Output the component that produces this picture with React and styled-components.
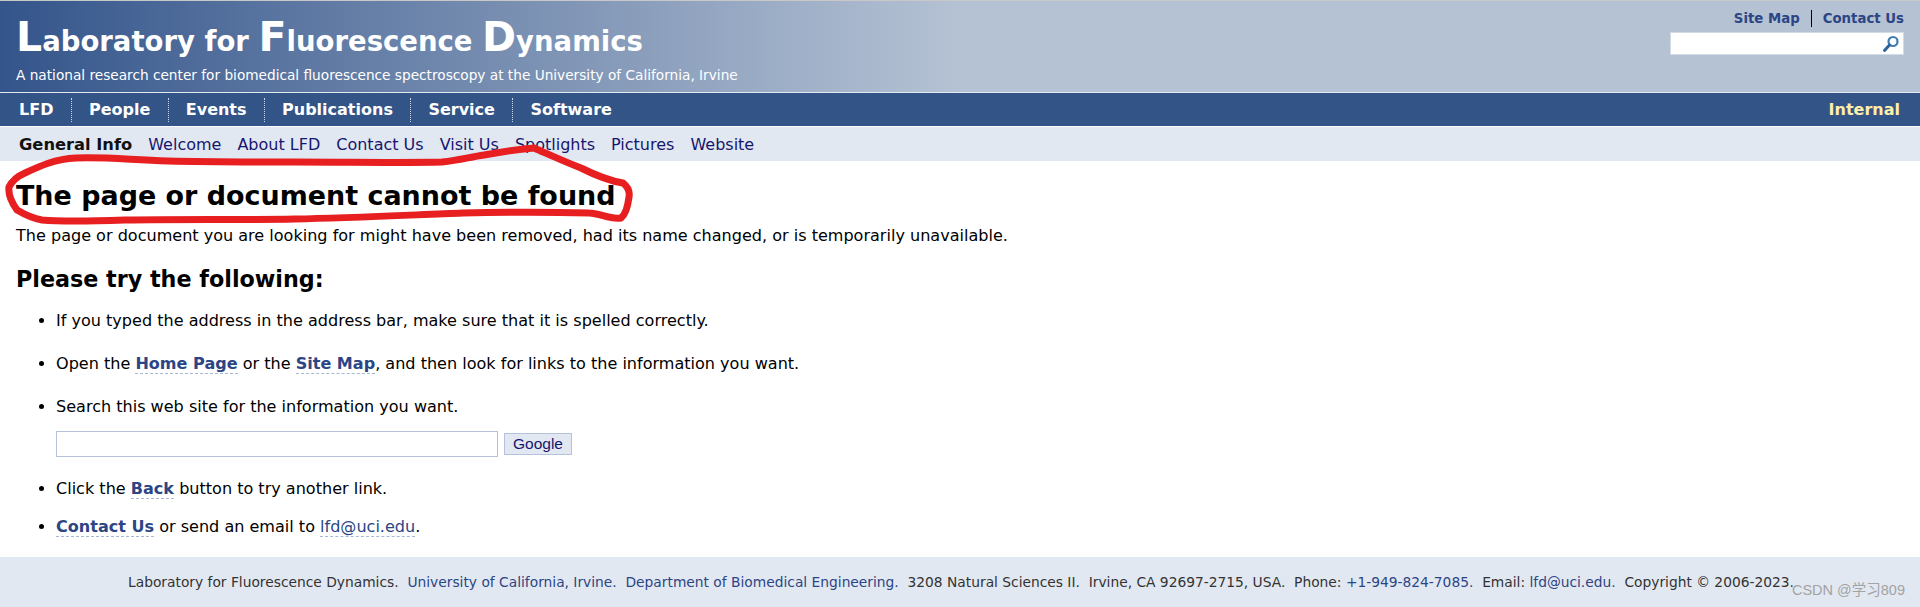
import React from "react";
import styled, { createGlobalStyle } from "styled-components";

const Global = createGlobalStyle`
  html, body { margin: 0; padding: 0; background: #fff; }
  body { font-family: "DejaVu Sans", Verdana, sans-serif; color: #000; }
`;
const Page = styled.div`position: relative; width: 1920px; height: 607px; overflow: hidden; display: flex; flex-direction: column;`;
const Header = styled.header`
  height: 91px; flex: none; display: flex; justify-content: space-between;
  border-top: 1px solid #c8c8c8; border-bottom: 1px solid #e4e9f1;
  background: linear-gradient(90deg, #34558b 0, #b5c2d4 960px, #b5c2d4 100%);
`;
const Brand = styled.div`padding: 0 0 0 16px; color: #fff;`;
const Title = styled.h1`margin: 14px 0 0; height: 44px; font-size: 27.5px; line-height: 44px; font-weight: 700; white-space: nowrap;`;
const Cap = styled.span`font-size: 41px;`;
const Tagline = styled.div`margin-top: 8px; font-size: 13.68px; line-height: 16px; white-space: nowrap;`;
const Tools = styled.div`display: flex; flex-direction: column; align-items: flex-end; padding: 9px 16px 0 0;`;
const ToolLinks = styled.div`display: flex; align-items: center; font-size: 13.3px; font-weight: 700; color: #2c4585; line-height: 17px;`;
const ToolLink = styled.span`padding: 0 ${(p) => (p.$last ? 0 : "11px")} 0 ${(p) => (p.$last ? "11px" : 0)}; border-left: ${(p) => (p.$last ? "1px solid #000" : "none")};`;
const SearchBox = styled.div`
  margin-top: 5px; width: 234px; height: 23px; box-sizing: border-box; background: #fff; border: 1px solid #d3dbe6;
  display: flex; align-items: center; justify-content: flex-end; padding-right: 3px;
`;
const MainNav = styled.nav`
  height: 33px; flex: none; background: #335487; display: flex; align-items: center; justify-content: space-between;
  border-bottom: 1px solid #fff; padding: 0 20px 0 19px;
`;
const NavList = styled.div`display: flex; align-items: center;`;
const NavItem = styled.span`
  font-size: 16px; font-weight: 700; color: #fff; line-height: 24px; padding: 0 17.25px;
  border-left: ${(p) => (p.$first ? "none" : "1px dotted #cfd6e2")};
  &:first-child { padding-left: 0; }
`;
const Internal = styled.span`font-size: 16px; font-weight: 700; color: #ffeeaa;`;
const SubNav = styled.nav`height: 34px; flex: none; background: #e2e8f1; display: flex; align-items: baseline; padding: 8px 19px 0; box-sizing: border-box; gap: 16px;`;
const SubActive = styled.span`font-size: 16.3px; font-weight: 700; color: #111;`;
const SubLink = styled.span`font-size: 16px; color: #16166e;`;
const Main = styled.main`flex: 1; padding: 19px 16px 0; font-size: 16.06px;`;
const H1 = styled.h2`margin: 0; font-size: 26.95px; line-height: 32px; font-weight: 700;`;
const Lead = styled.p`margin: 14px 0 0; line-height: 20px;`;
const H2 = styled.h3`margin: 20px 0 0; font-size: 22.25px; line-height: 26px; font-weight: 700;`;
const List = styled.ul`margin: 19px 0 0; padding: 0 0 0 40px;`;
const Item = styled.li`line-height: 20px; margin-bottom: ${(p) => p.$gap}px;`;
const Strong = styled.a`font-weight: 700; color: #2c4585; border-bottom: 1px dashed #a9b8d2;`;
const Plain = styled.a`color: #2c4585; border-bottom: 1px dashed #a9b8d2;`;
const SearchRow = styled.div`display: flex; align-items: center; gap: 6px; margin-top: 14px;`;
const Input = styled.div`width: 442px; height: 26px; box-sizing: border-box; border: 1px solid #b5c2d9; background: #fff;`;
const GoogleBtn = styled.div`
  width: 68px; height: 22px; box-sizing: border-box; border: 1px solid #b5c2d9; background: #e2e8f1; color: #16166e;
  font-family: "Liberation Sans", Arial, sans-serif; font-size: 15.5px; line-height: 20px; text-align: center;
`;
const Footer = styled.footer`
  height: 50px; flex: none; background: #e2e8f1; display: flex; justify-content: center; align-items: center;
  font-size: 13.8px; color: #333; padding-left: 2px;
`;
const FootText = styled.p`margin: 0; white-space: pre;`;
const FootLink = styled.span`color: #2c4585;`;
const Watermark = styled.div`
  position: absolute; right: 15px; bottom: 8px; font-family: "Liberation Sans", "Noto Sans CJK SC", sans-serif; font-size: 14.5px; color: #a3a3a3;
`;
const Scribble = styled.svg`position: absolute; left: 0; top: 0; pointer-events: none;`;

const sub = ["Welcome", "About LFD", "Contact Us", "Visit Us", "Spotlights", "Pictures", "Website"];
const nav = ["LFD", "People", "Events", "Publications", "Service", "Software"];

export default function App() {
  return (
    <Page>
      <Global />
      <Header>
        <Brand>
          <Title><Cap>L</Cap>aboratory for <Cap>F</Cap>luorescence <Cap>D</Cap>ynamics</Title>
          <Tagline>A national research center for biomedical fluorescence spectroscopy at the University of California, Irvine</Tagline>
        </Brand>
        <Tools>
          <ToolLinks>
            <ToolLink>Site Map</ToolLink>
            <ToolLink $last>Contact Us</ToolLink>
          </ToolLinks>
          <SearchBox>
            <svg width="18" height="18" viewBox="0 0 18 18" fill="none">
              <circle cx="11" cy="6.5" r="4.5" stroke="#3f7cb3" strokeWidth="2.2" />
              <path d="M7.5 10 2.5 15.5" stroke="#2f639c" strokeWidth="3" strokeLinecap="round" />
            </svg>
          </SearchBox>
        </Tools>
      </Header>
      <MainNav>
        <NavList>
          {nav.map((n, i) => <NavItem key={n} $first={i === 0}>{n}</NavItem>)}
        </NavList>
        <Internal>Internal</Internal>
      </MainNav>
      <SubNav>
        <SubActive>General Info</SubActive>
        {sub.map((s) => <SubLink key={s}>{s}</SubLink>)}
      </SubNav>
      <Main>
        <H1>The page or document cannot be found</H1>
        <Lead>The page or document you are looking for might have been removed, had its name changed, or is temporarily unavailable.</Lead>
        <H2>Please try the following:</H2>
        <List>
          <Item $gap={23}>If you typed the address in the address bar, make sure that it is spelled correctly.</Item>
          <Item $gap={23}>Open the <Strong>Home Page</Strong> or the <Strong>Site Map</Strong>, and then look for links to the information you want.</Item>
          <Item $gap={22}>Search this web site for the information you want.
            <SearchRow><Input /><GoogleBtn>Google</GoogleBtn></SearchRow>
          </Item>
          <Item $gap={18}>Click the <Strong>Back</Strong> button to try another link.</Item>
          <Item $gap={0}><Strong>Contact Us</Strong> or send an email to <Plain>lfd@uci.edu</Plain>.</Item>
        </List>
      </Main>
      <Footer>
        <FootText>Laboratory for Fluorescence Dynamics.{"  "}<FootLink>University of California, Irvine.</FootLink>{"  "}<FootLink>Department of Biomedical Engineering.</FootLink>{"  "}3208 Natural Sciences II.{"  "}Irvine, CA 92697-2715, USA.{"  "}Phone: <FootLink>+1-949-824-7085.</FootLink>{"  "}Email: <FootLink>lfd@uci.edu.</FootLink>{"  "}Copyright © 2006-2023.</FootText>
      </Footer>
      <Watermark>CSDN @学习809</Watermark>
      <Scribble width="1920" height="607" viewBox="0 0 1920 607" fill="none">
        <path d="M9 187 C12 181 18 176 25 173 C40 166 55 159 76 158 C110 157 130 160 168 161 C210 162 250 162 295 162 C350 162 400 163 442 162 C460 160 470 157 484 155 C500 152 520 149 534 148 C550 155 565 162 581 168 C595 175 610 181 623 183 C628 187 630 192 629 197 C628 205 626 214 621 218 C610 220 600 213 589 213 C550 212 510 212 463 213 C410 215 350 218 295 219 C240 220 180 219 126 220 C95 221 65 222 42 220 C30 218 22 213 17 210 C12 203 8 195 9 187 Z"
          stroke="#e81f21" strokeWidth="7" strokeLinejoin="round" />
      </Scribble>
    </Page>
  );
}
